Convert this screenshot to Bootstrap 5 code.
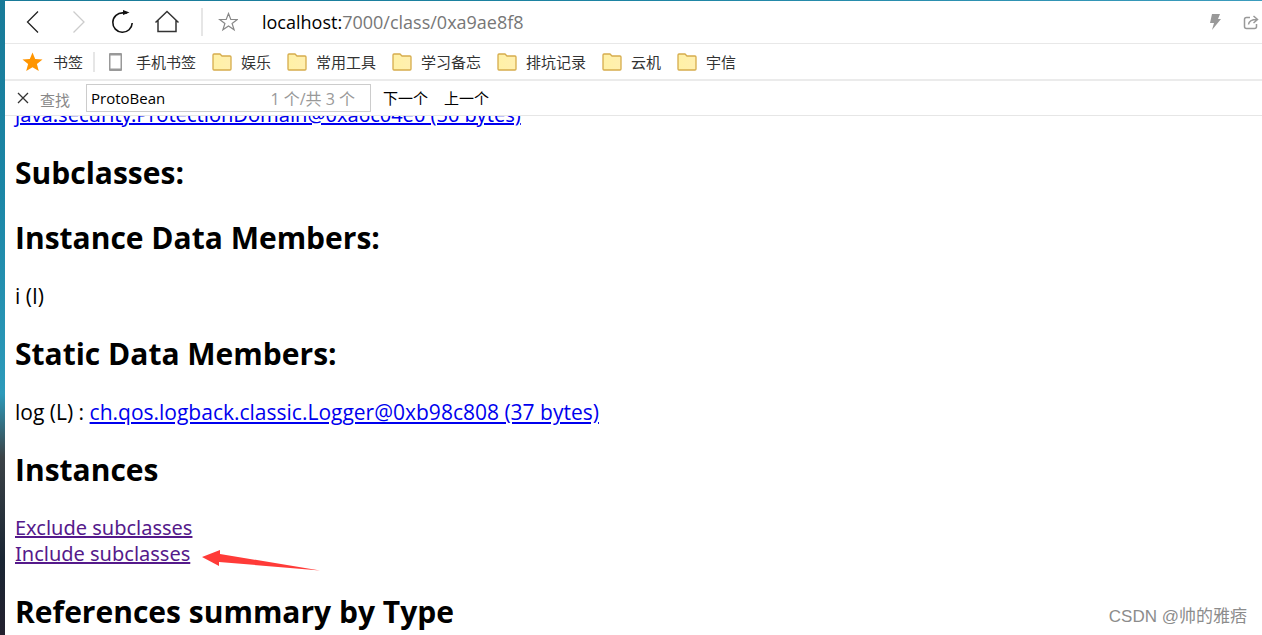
<!DOCTYPE html>
<html lang="zh-CN">
<head>
<meta charset="utf-8">
<meta name="viewport" content="width=device-width, initial-scale=1">
<title>Class 0xa9ae8f8</title>
<link rel="stylesheet" href="https://cdn.jsdelivr.net/npm/bootstrap@5.3.0/dist/css/bootstrap.min.css">
<style>
  body { font-family: "Open Sans", "Noto Sans CJK SC", sans-serif; color: #000; background: #fff; }
  .desktop { height: 100vh; padding: 1px 0 0 5px; background: linear-gradient(#187a98 0, #1b86a6 30%, #2d9aba 62%, #3c4347 72%, #1a2634 88%, #23202e 100%); }
  .desktop::before { content: ""; position: absolute; inset: 0 0 auto 5px; height: 1px; background: linear-gradient(90deg, #187a98, #1d84a3 50%, #3b9cbd); }
  .ui button { border: 0; background: none; padding: 0; color: inherit; white-space: nowrap; }
  .ui svg { display: block; flex: none; }
  .toolbar { height: 43px; padding: 0 1px 0 16px; border-bottom: 1px solid #e8e8e8; }
  .toolbar .split { height: 28px; border-left: 2px solid #e6e6e6; margin: 0 15px 0 22px; }
  .address { border: 0; outline: 0; background: none; padding: 0; font-size: 18px; line-height: 24px; margin-left: 24px; color: #777; }
  .address b { font-weight: 400; color: #000; }
  .bookmarks { height: 37px; padding-left: 17px; border-bottom: 2px solid #ebebeb; font-size: 15px; line-height: 20px; }
  .bookmarks a { color: #333; text-decoration: none; display: flex; align-items: center; gap: 9px; white-space: nowrap; }
  .bookmarks .split { height: 20px; border-left: 2px solid #e6e6e6; margin: 0 12px 0 10px; }
  .findbar { height: 35px; padding-left: 11px; border-bottom: 1px solid #e6e6e6; font-size: 15px; line-height: 20px; }
  .findbar label { color: #888; margin: 3px 16px 0 10px; }
  .findbox { width: 285px; height: 28px; border: 1px solid #ccc; padding: 0 15px 0 4px; }
  .findbox input { border: 0; outline: 0; padding: 0; min-width: 0; flex: 1; color: #000; }
  .findbox output { color: #999; padding-top: 2px; font-size: 16px; white-space: nowrap; }
  .page { overflow: hidden; padding-left: 10px; font-family: "Noto Sans", "Noto Sans CJK SC", sans-serif; font-size: 20px; line-height: 26px; }
  .scrolled { margin-top: -14px; }
  .page h2 { font-family: "Open Sans", sans-serif; font-size: 30px; font-weight: 700; line-height: 40px; margin: 25px 0; }
  .member { font-family: "Open Sans", sans-serif; font-size: 21px; }
  .page a { color: #0000ee; text-decoration: underline; }
  .page a.seen { color: #551a8b; }
  .pointer { display: inline-block; margin-left: 12px; vertical-align: top; overflow: visible; }
  .watermark { position: absolute; right: 15px; bottom: 6px; font-family: "Liberation Sans", "Noto Sans CJK SC", sans-serif; font-size: 17px; line-height: 24px; color: #8c8c8c; }
</style>
</head>
<body>
<svg width="0" height="0" class="position-absolute" aria-hidden="true">
  <defs>
    <linearGradient id="fold" x2="1"><stop offset="0" stop-color="#fff1a6"/><stop offset="1" stop-color="#ffefb0"/></linearGradient>
    <symbol id="folder" viewBox="0 0 20 18"><path d="M1 16V2q0-1 1-1h6l2 2h8q1 0 1 1v12q0 1-1 1H2q-1 0-1-1Z" fill="url(#fold)" stroke="#d6ac4c" stroke-width="1.3"/></symbol>
  </defs>
</svg>
<div class="desktop position-relative overflow-hidden">
  <div class="h-100 d-flex flex-column bg-white">
    <header class="ui">
      <nav class="toolbar d-flex align-items-center">
        <button aria-label="Back"><svg width="24" height="24" fill="none" stroke="#222" stroke-width="1.3"><path d="M17 1.500 6.500 12 17 22.500"/></svg></button>
        <button aria-label="Forward" class="ms-4"><svg width="20" height="24" fill="none" stroke="#ccc" stroke-width="1.300"><path d="M4.500 1.500 15 12 4.500 22.500"/></svg></button>
        <button aria-label="Reload" class="ms-3"><svg class="ms-1" width="24" height="24" fill="none" stroke="#111" stroke-width="1.600"><path d="M18 2.900H14A9.700 9.700 0 1 0 23.200 13"/><path d="m14 0 6.500 2.500-6.500 2.500Z" fill="#111" stroke="none"/></svg></button>
        <button aria-label="Home" class="ms-3"><svg class="ms-1" width="26" height="24" fill="none" stroke="#333" stroke-width="1.500"><path d="M2.500 12.500 14 1.500l11.500 11M5 10.500v11h18v-11"/></svg></button>
        <span class="split"></span>
        <button aria-label="Add bookmark"><svg width="20" height="20" fill="none" stroke="#888" stroke-width="1.200"><path d="m10.500 1.500 2.300 6h6.500l-5.200 4 2 6.300-5.600-3.800-5.600 3.800 2-6.300-5.200-4h6.500Z"/></svg></button>
        <div class="address flex-grow-1"><b>localhost:</b>7000/class/0xa9ae8f8</div>
        <button aria-label="Speed mode"><svg width="14" height="18" fill="#999"><path d="M3 1h8l-2 5h3L3 17l2-7H1Z"/></svg></button>
        <button aria-label="Share" class="ms-3 ps-1"><svg width="18" height="18" fill="none" stroke="#999" stroke-width="1.500"><path d="M7 4.500H3.500Q1.500 4.500 1.500 6.500v7q0 2 2 2h8q2 0 2-2V11M5.500 11.500Q6 6.500 14 6.500M10.500 3l4 3.500-4 3.500"/></svg></button>
      </nav>
      <nav class="bookmarks d-flex align-items-center">
        <a href="#"><svg width="22" height="22" fill="#ff9500"><path d="m10.500 1.500 2.700 6.600 7.300.5-5.600 4.500 1.900 6.900-6.300-3.800L4.200 20l1.900-6.900L.500 8.600l7.300-.5Z"/></svg>书签</a>
        <span class="split"></span>
        <a href="#" class="me-3"><svg width="20" height="20"><rect x="2" y="1" width="13" height="18" rx="1" fill="#999"/><path d="M3.500 3.500h10v13h-10Z" fill="#fff"/></svg>手机书签</a>
        <a href="#" class="me-3"><svg width="20" height="18"><use href="#folder"/></svg>娱乐</a>
        <a href="#" class="me-3"><svg width="20" height="18"><use href="#folder"/></svg>常用工具</a>
        <a href="#" class="me-3"><svg width="20" height="18"><use href="#folder"/></svg>学习备忘</a>
        <a href="#" class="me-3"><svg width="20" height="18"><use href="#folder"/></svg>排坑记录</a>
        <a href="#" class="me-3"><svg width="20" height="18"><use href="#folder"/></svg>云机</a>
        <a href="#"><svg width="20" height="18"><use href="#folder"/></svg>宇信</a>
      </nav>
      <form class="findbar d-flex align-items-center">
        <button type="button" aria-label="Close"><svg width="14" height="14" stroke="#333" stroke-width="1.300"><path d="m2 2 10 10M12 2 2 12"/></svg></button>
        <label for="q">查找</label>
        <div class="findbox d-flex align-items-center"><input id="q" value="ProtoBean" autocomplete="off"><output for="q">1 个/共 3 个</output></div>
        <button type="button" class="ms-2 ps-1">下一个</button>
        <button type="button" class="ms-3">上一个</button>
      </form>
    </header>
    <main class="page flex-grow-1">
      <div class="scrolled">
        <a href="#">java.security.ProtectionDomain@0xa6c04e0 (50 bytes)</a>
        <h2>Subclasses:</h2>
        <h2>Instance Data Members:</h2>
        <div class="member">i (I)</div>
        <h2>Static Data Members:</h2>
        <div class="member">log (L) : <a href="#">ch.qos.logback.classic.Logger@0xb98c808 (37 bytes)</a></div>
        <h2>Instances</h2>
        <div><a href="#" class="seen">Exclude subclasses</a></div>
        <div><a href="#" class="seen">Include subclasses</a><svg class="pointer" width="120" height="26" fill="#ff3b38" aria-hidden="true"><path d="m0 16 18-7v4l100 16.500L17 21v4Z"/></svg></div>
        <h2>References summary by Type</h2>
      </div>
    </main>
  </div>
  <div class="watermark">CSDN @帅的雅痞</div>
</div>
<script src="https://cdn.jsdelivr.net/npm/bootstrap@5.3.0/dist/js/bootstrap.bundle.min.js"></script>
</body>
</html>
